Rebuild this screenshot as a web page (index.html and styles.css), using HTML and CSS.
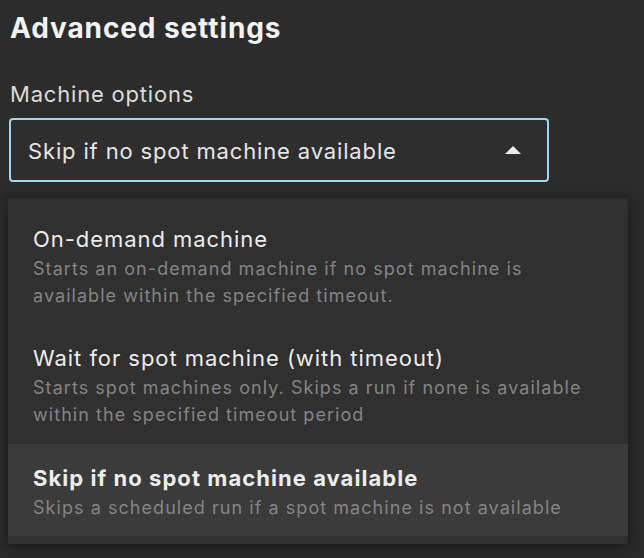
FILE: index.html
```html
<!DOCTYPE html>
<html>
<head>
<meta charset="utf-8">
<link rel="stylesheet" href="styles.css">
</head>
<body>
<div class="page">
  <h1 class="title">Advanced settings</h1>
  <div class="label">Machine options</div>
  <div class="select">
    <span class="select-value">Skip if no spot machine available</span>
    <span class="caret"></span>
  </div>
  <div class="menu">
    <div class="option">
      <div class="option-title">On-demand machine</div>
      <div class="option-desc">Starts an on-demand machine if no spot machine is<br>available within the specified timeout.</div>
    </div>
    <div class="option">
      <div class="option-title">Wait for spot machine (with timeout)</div>
      <div class="option-desc">Starts spot machines only. Skips a run if none is available<br>within the specified timeout period</div>
    </div>
    <div class="option selected">
      <div class="option-title">Skip if no spot machine available</div>
      <div class="option-desc">Skips a scheduled run if a spot machine is not available</div>
    </div>
  </div>
</div>
</body>
</html>
```
FILE: styles.css
```css
html, body {
  margin: 0;
  padding: 0;
  background: #2c2c2c;
  font-family: Inter, "Noto Sans", sans-serif;
  width: 644px;
  height: 558px;
  overflow: hidden;
}
.page {
  padding: 11px 0 0 8px;
}
.title {
  margin: 0 0 0 2px;
  font-size: 28px;
  line-height: 34px;
  font-weight: 700;
  color: #f2f2f2;
  letter-spacing: 0.9px;
}
.label {
  margin: 35px 0 0 2px;
  font-size: 22px;
  line-height: 28px;
  color: #dcdcdc;
  letter-spacing: 0.8px;
}
.select {
  box-sizing: border-box;
  margin: 10px 0 0 1px;
  width: 540px;
  height: 64px;
  border: 2px solid #a0d6f0;
  border-radius: 4px;
  background: #2e2e2e;
  display: flex;
  align-items: center;
  padding: 1px 26px 0 17px;
}
.select-value {
  flex: 1;
  font-size: 22px;
  line-height: 28px;
  color: #e6e6e6;
  letter-spacing: 0.85px;
}
.caret {
  width: 0;
  height: 0;
  border-left: 8px solid transparent;
  border-right: 8px solid transparent;
  border-bottom: 8px solid #ececec;
  margin-top: -2px;
}
.menu {
  margin-top: 16px;
  width: 620px;
  background: #303030;
  padding: 8px 0;
  box-shadow: 0 6px 18px rgba(0, 0, 0, 0.35), 0 0 6px rgba(0, 0, 0, 0.25);
}
.option {
  padding: 18px 24px 16px 25px;
}
.option.selected {
  background: #3b3b3b;
  padding-top: 19px;
  padding-bottom: 15px;
}
.option-title {
  font-size: 22px;
  line-height: 31px;
  color: #ececec;
  letter-spacing: 0.95px;
}
.option.selected .option-title {
  font-weight: 700;
  letter-spacing: 1.05px;
}
.option-desc {
  font-size: 18px;
  line-height: 27px;
  color: #848484;
  letter-spacing: 1.05px;
}
```
